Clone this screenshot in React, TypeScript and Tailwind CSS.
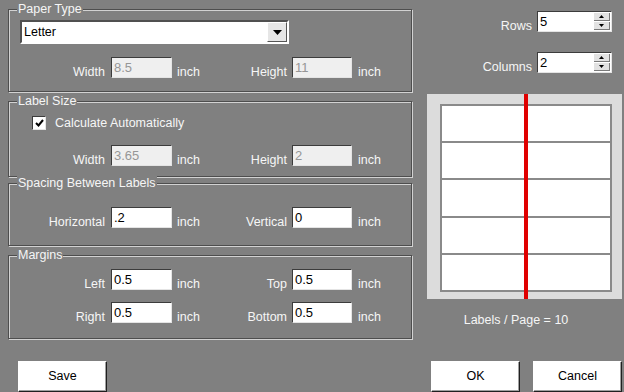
import type { ReactNode } from 'react'

const FIELD =
  'h-[21px] border border-t-[#3c3c3c] border-l-[#3c3c3c] border-r-[#e4e4e4] border-b-[#e4e4e4] pl-[2px] flex items-center leading-none text-[13px]'

function GroupBox({ title, className, children }: { title: string; className: string; children: ReactNode }) {
  return (
    <div
      className={`relative border border-[#4e4e4e] shadow-[inset_1px_1px_0_#d2d2d2,1px_1px_0_#d2d2d2] ${className}`}
    >
      <span className="absolute left-[8px] -top-[8px] bg-[#808080] px-[1px] leading-[14px]">{title}</span>
      {children}
    </div>
  )
}

function Field({ value, disabled = false, width }: { value: string; disabled?: boolean; width: string }) {
  return (
    <div className={`${FIELD} ${width} ${disabled ? 'bg-[#efefef] text-[#969696]' : 'bg-white text-black'}`}>
      {value}
    </div>
  )
}

/** Two labelled inch fields on one line. */
function PairRow({
  left,
  leftValue,
  right,
  rightValue,
  disabled = false,
  className = '',
}: {
  left: string
  leftValue: string
  right: string
  rightValue: string
  disabled?: boolean
  className?: string
}) {
  return (
    <div className={`flex items-center h-[21px] ${className}`}>
      <span className="w-[96px] text-right mt-[9px]">{left}</span>
      <div className="ml-[6px]">
        <Field value={leftValue} disabled={disabled} width="w-[61px]" />
      </div>
      <span className="ml-[5px] w-[34px] mt-[10px]">inch</span>
      <span className="w-[76px] text-right mt-[9px]">{right}</span>
      <div className="ml-[5px]">
        <Field value={rightValue} disabled={disabled} width="w-[60px]" />
      </div>
      <span className="ml-[6px] mt-[10px]">inch</span>
    </div>
  )
}

function Spinner({ label, value, className = '' }: { label: string; value: string; className?: string }) {
  return (
    <div className={`flex items-center h-[21px] ${className}`}>
      <span className="w-[105px] text-right mt-[10px]">{label}</span>
      <div className={`${FIELD} ml-[5px] w-[75px] bg-white text-black justify-between pr-[1px]`}>
        <span>{value}</span>
        <div className="flex flex-col gap-[1px]">
          <div className="w-[16px] h-[8px] bg-[#e2e2e2] border-r border-b border-[#7a7a7a] flex items-center justify-center">
            <svg width="5" height="3" viewBox="0 0 5 3">
              <path d="M2.5 0 L5 3 L0 3 Z" fill="#000" />
            </svg>
          </div>
          <div className="w-[16px] h-[8px] bg-[#e2e2e2] border-r border-b border-[#7a7a7a] flex items-center justify-center">
            <svg width="5" height="3" viewBox="0 0 5 3">
              <path d="M0 0 L5 0 L2.5 3 Z" fill="#000" />
            </svg>
          </div>
        </div>
      </div>
    </div>
  )
}

function Button({ label, className = '' }: { label: string; className?: string }) {
  return (
    <div
      className={`w-[89px] h-[31px] bg-white text-black border border-t-white border-l-white border-r-[#202020] border-b-[#202020] shadow-[inset_-1px_-1px_0_#a0a0a0] flex items-center justify-center ${className}`}
    >
      {label}
    </div>
  )
}

export default function App() {
  const rows = [0, 1, 2, 3, 4]
  return (
    <div className="w-[624px] h-[392px] overflow-hidden bg-[#808080] text-[#f6f6f6] text-[12.5px] font-['Liberation_Sans',Arial,sans-serif] flex flex-col">
      <div className="flex">
        {/* left column: settings groups */}
        <div className="ml-[8px] w-[404px] pt-[9px] flex flex-col">
          <GroupBox title="Paper Type" className="h-[83px] pt-[10px]">
            <div className="ml-[11px] w-[269px] h-[24px] bg-white border-2 border-t-[#505050] border-l-[#505050] border-r-white border-b-white flex items-center justify-between text-black">
              <span className="pl-[2px]">Letter</span>
              <div className="w-[20px] h-[20px] bg-[#e6e6e6] border border-t-white border-l-white border-r-[#555] border-b-[#555] flex items-center justify-center">
                <svg width="9" height="5" viewBox="0 0 9 5">
                  <path d="M0 0 L9 0 L4.5 5 Z" fill="#000" />
                </svg>
              </div>
            </div>
            <PairRow className="mt-[13px]" left="Width" leftValue="8.5" right="Height" rightValue="11" disabled />
          </GroupBox>

          <GroupBox title="Label Size" className="mt-[9px] h-[76px] pt-[14px]">
            <div className="flex items-center h-[14px]">
              <div className="ml-[23px] w-[14px] h-[14px] bg-white border border-t-[#3c3c3c] border-l-[#3c3c3c] border-r-[#e4e4e4] border-b-[#e4e4e4] flex items-center justify-center">
                <svg width="9" height="8" viewBox="0 0 9 8">
                  <path d="M1 4 L3.5 6.5 L8 1" stroke="#000" strokeWidth="2" fill="none" />
                </svg>
              </div>
              <span className="ml-[9px]">Calculate Automatically</span>
            </div>
            <PairRow className="mt-[15px]" left="Width" leftValue="3.65" right="Height" rightValue="2" disabled />
          </GroupBox>

          <GroupBox title="Spacing Between Labels" className="mt-[6px] h-[63px] pt-[23px]">
            <PairRow left="Horizontal" leftValue=".2" right="Vertical" rightValue="0" />
          </GroupBox>

          <GroupBox title="Margins" className="mt-[9px] h-[84px] pt-[13px]">
            <PairRow left="Left" leftValue="0.5" right="Top" rightValue="0.5" />
            <PairRow className="mt-[12px]" left="Right" leftValue="0.5" right="Bottom" rightValue="0.5" />
          </GroupBox>
        </div>

        {/* right column: counts and preview */}
        <div className="ml-[15px] w-[197px] pt-[11px] flex flex-col">
          <Spinner label="Rows" value="5" />
          <Spinner label="Columns" value="2" className="mt-[20px]" />
          <div className="relative mt-[21px] w-[195px] h-[205px] bg-[#dcdcdc] pt-[10px] pl-[13px]">
            <div className="w-[172px] h-[188px] border-2 border-[#8a8a8a] bg-white flex flex-col">
              {rows.map((r) => (
                <div key={r} className={`flex-1 ${r > 0 ? 'border-t-2 border-[#8a8a8a]' : ''}`} />
              ))}
            </div>
            <div className="absolute top-0 left-[97px] w-[4px] h-full bg-[#e00000]" />
          </div>
          <div className="mt-[12px] w-[178px] text-center">Labels / Page = 10</div>
        </div>
      </div>

      <div className="mt-[22px] flex">
        <Button label="Save" className="ml-[18px]" />
        <Button label="OK" className="ml-[324px]" />
        <Button label="Cancel" className="ml-[13px]" />
      </div>
    </div>
  )
}
